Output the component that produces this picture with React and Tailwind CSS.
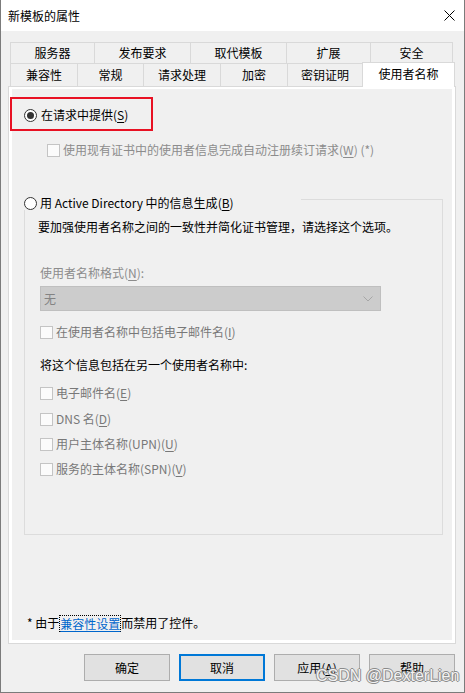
import React from 'react'

const line = 'border-[#d9d9d9]'

function Radio({ checked }) {
  return (
    <span className="w-[13px] h-[13px] shrink-0 rounded-full border border-[#333333] bg-white flex items-center justify-center">
      {checked && <span className="w-[7px] h-[7px] rounded-full bg-[#333333]" />}
    </span>
  )
}

function Box() {
  return <span className="w-[13px] h-[13px] shrink-0 border border-[#c4c4c4] bg-[#fbfbfb]" />
}

function Key({ k }) {
  return (
    <>
      (<u className="underline-offset-[2px]">{k}</u>)
    </>
  )
}

function CheckRow({ className = '', children }) {
  return (
    <div className={`h-[16px] flex items-center gap-[3px] pl-[15px] text-[#787878] ${className}`}>
      <Box />
      <span className="leading-[16px] whitespace-nowrap">{children}</span>
    </div>
  )
}

const row1 = [
  ['服务器', 'w-[85px] border-l'],
  ['发布要求', 'w-[96px]'],
  ['取代模板', 'w-[96px]'],
  ['扩展', 'w-[84px]'],
  ['安全', 'w-[82px]'],
]

const row2 = [
  ['兼容性', 'w-[68px] border-l'],
  ['常规', 'w-[66px]'],
  ['请求处理', 'w-[77px]'],
  ['加密', 'w-[67px]'],
  ['密钥证明', 'w-[75px]'],
]

const buttons = ['确定', '取消', '应用', '帮助']

export default function App() {
  return (
    <div className="w-[465px] h-[693px] bg-[#f0f0f0] border-x border-b border-[#7b7b7b] flex flex-col relative overflow-hidden text-[12px] text-black font-['Noto_Sans_CJK_SC',sans-serif]">
      {/* title bar */}
      <div className="h-[31px] shrink-0 bg-white flex items-center justify-between pl-[7px] pr-[9px]">
        <span className="leading-[16px]">新模板的属性</span>
        <svg width="11" height="11" viewBox="0 0 11 11" className="shrink-0">
          <path d="M0.5 0.5 L10.5 10.5 M10.5 0.5 L0.5 10.5" stroke="#000" strokeWidth="1" fill="none" />
        </svg>
      </div>

      <div className="pl-[7px] pr-[8px] pt-[11px]">
        {/* tabs */}
        <div className="ml-[2px]">
          <div className="flex h-[21px]">
            {row1.map(([t, c]) => (
              <div key={t} className={`${c} h-full border-t border-r ${line} flex items-center justify-center leading-[16px]`}>
                {t}
              </div>
            ))}
          </div>
          <div className="flex h-[23px] items-end">
            {row2.map(([t, c]) => (
              <div key={t} className={`${c} h-[23px] border-t border-r ${line} flex items-center justify-center leading-[16px]`}>
                {t}
              </div>
            ))}
            <div className={`w-[93px] h-[25px] -ml-px -mb-px relative z-10 bg-white border-t border-x ${line} flex items-center justify-center pb-[3px] leading-[16px]`}>
              使用者名称
            </div>
          </div>
        </div>

        {/* tab page */}
        <div className={`relative h-[558px] border ${line} bg-white pt-[2px] px-[3px] pb-[3px]`}>
          <div className="h-full bg-[#f0f0f0] flex flex-col">
            <div className="mt-[18px] h-[16px] flex items-center gap-[4px] pl-[12px]">
              <Radio checked />
              <span className="leading-[16px]">
                在请求中提供<Key k="S" />
              </span>
            </div>

            <div className="mt-[19px] h-[16px] flex items-center gap-[3px] pl-[35px] text-[#8c8c8c]">
              <Box />
              <span className="leading-[16px] whitespace-nowrap">
                使用现有证书中的使用者信息完成自动注册续订请求<Key k="W" /> (*)
              </span>
            </div>

            <div className="mt-[38px] ml-[12px] mr-[9px]">
              <div className="h-[14px] flex items-start">
                <div className="w-[277px] h-[14px] flex items-center gap-[3px] shrink-0">
                  <Radio />
                  <span className="leading-[16px] whitespace-nowrap">
                    用 Active Directory 中的信息生成<Key k="B" />
                  </span>
                </div>
                <div className="flex-1 mt-[3px] h-[11px] border-t border-r border-[#dcdcdc]" />
              </div>

              <div className="h-[325px] border-l border-r border-b border-[#dcdcdc] flex flex-col">
                <div className="mt-[9px] h-[16px] pl-[13px] flex items-center leading-[16px] whitespace-nowrap">
                  要加强使用者名称之间的一致性并简化证书管理，请选择这个选项。
                </div>
                <div className="mt-[30px] h-[16px] pl-[15px] flex items-center leading-[16px] text-[#8c8c8c]">
                  <span>
                    使用者名称格式<Key k="N" />:
                  </span>
                </div>
                <div className="mt-[5px] ml-[15px] w-[341px] h-[25px] bg-[#cccccc] border border-[#bfbfbf] flex items-center justify-between pl-[3px] pr-[7px]">
                  <span className="leading-[16px] text-[#838383]">无</span>
                  <svg width="10" height="6" viewBox="0 0 10 6">
                    <path d="M0.5 0.5 L5 5 L9.5 0.5" stroke="#a6a6a6" strokeWidth="1" fill="none" />
                  </svg>
                </div>
                <CheckRow className="mt-[13px]">
                  在使用者名称中包括电子邮件名<Key k="I" />
                </CheckRow>
                <div className="mt-[17px] h-[16px] pl-[15px] flex items-center leading-[16px]">
                  将这个信息包括在另一个使用者名称中:
                </div>
                <CheckRow className="mt-[12px]">
                  电子邮件名<Key k="E" />
                </CheckRow>
                <CheckRow className="mt-[10px]">
                  DNS 名<Key k="D" />
                </CheckRow>
                <CheckRow className="mt-[9px]">
                  用户主体名称(UPN)<Key k="U" />
                </CheckRow>
                <CheckRow className="mt-[9px]">
                  服务的主体名称(SPN)<Key k="V" />
                </CheckRow>
              </div>
            </div>

            <div className="mt-[80px] h-[16px] pl-[15px] flex items-center leading-[16px] whitespace-nowrap">
              <span>*&nbsp;由于</span>
              <span className="border border-dotted border-black text-[#0066cc] underline underline-offset-[2px] leading-[15px]">
                兼容性设置
              </span>
              <span>而禁用了控件。</span>
            </div>
          </div>

          {/* red highlight drawn over the first option */}
          <div className="absolute left-[1px] top-[10px] w-[143px] h-[34px] border-2 border-[#e81123]" />
        </div>

        {/* buttons */}
        <div className="mt-[10px] h-[27px] flex justify-end gap-[9px] pr-[1px]">
          {buttons.map((b) => (
            <div
              key={b}
              className={`w-[86px] h-[27px] bg-[#e1e1e1] flex items-center justify-center leading-[16px] ${
                b === '取消' ? 'border-2 border-[#0078d7]' : 'border border-[#adadad]'
              }`}
            >
              {b === '应用' ? (
                <span>
                  应用<Key k="A" />
                </span>
              ) : (
                b
              )}
            </div>
          ))}
        </div>
      </div>

      {/* watermark */}
      <div className="absolute left-[315px] top-[668px] text-[16px] leading-[16px] text-white/90 font-['Liberation_Sans',sans-serif] [text-shadow:1px_0_0_#8a8a8a,-1px_0_0_#8a8a8a,0_1px_0_#8a8a8a,0_-1px_0_#8a8a8a] whitespace-nowrap pointer-events-none">
        CSDN @DexterLien
      </div>
    </div>
  )
}
